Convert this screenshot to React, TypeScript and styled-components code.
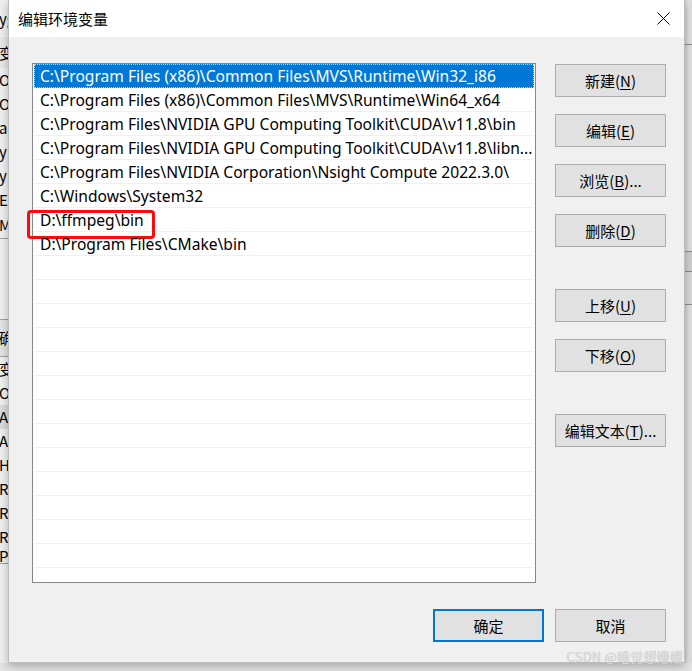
import React from "react";
import styled, { createGlobalStyle } from "styled-components";

const Global = createGlobalStyle`
  html, body { margin: 0; padding: 0; background: #f0f0f0; }
  #root { width: 692px; height: 671px; overflow: hidden; }
`;

const UI_FONT = `"Noto Sans", "Noto Sans CJK SC", sans-serif`;
const CJK_FONT = `"Noto Sans CJK SC", "Noto Sans", sans-serif`;

const Desktop = styled.div`
  position: relative;
  width: 692px;
  height: 671px;
  background: #e9e9e9;
  display: flex;
  flex-direction: column;
  overflow: hidden;
`;

const Middle = styled.div`
  display: flex;
  height: 663px;
`;

const LeftPeek = styled.div`
  width: 8px;
  flex: none;
  overflow: hidden;
  background: #f0f0f0;
  display: flex;
  flex-direction: column;
  font-family: ${CJK_FONT};
  font-size: 15px;
  color: #000;
`;

const PeekLine = styled.div<{ $h?: number; $bg?: string; $line?: boolean }>`
  height: ${(p) => p.$h ?? 24}px;
  line-height: ${(p) => p.$h ?? 24}px;
  white-space: nowrap;
  background: ${(p) => p.$bg ?? "transparent"};
  border-bottom: ${(p) => (p.$line ? "1px solid #a0a0a0" : "none")};
  margin-left: -1px;
  flex: none;
`;

const RightPeek = styled.div`
  width: 7px;
  flex: none;
  background: linear-gradient(to right, #d4d4d4, #e4e4e4 60%, #dcdcdc);
  display: flex;
  flex-direction: column;
`;

const RightBand = styled.div<{ $h: number; $bg: string; $line?: boolean }>`
  height: ${(p) => p.$h}px;
  flex: none;
  background: ${(p) => p.$bg};
  border-bottom: ${(p) => (p.$line ? "1px solid #8a8a8a" : "none")};
`;

const BottomPeek = styled.div`
  height: 8px;
  flex: none;
  background: #e4e4e4;
`;

const Dialog = styled.div`
  position: relative;
  z-index: 1;
  width: 677px;
  flex: none;
  box-sizing: border-box;
  background: #f0f0f0;
  border: 1px solid #bdbdbd;
  border-top: none;
  box-shadow: 0 3px 9px rgba(0, 0, 0, 0.28);
  display: flex;
  flex-direction: column;
`;

const TitleBar = styled.div`
  height: 37px;
  flex: none;
  background: #ffffff;
  display: flex;
  align-items: center;
  justify-content: space-between;
  padding: 0 14px 0 9px;
`;

const Title = styled.div`
  font-family: ${CJK_FONT};
  font-size: 15px;
  color: #000;
  padding-bottom: 1px;
`;

const CloseIcon = styled.svg`
  width: 13px;
  height: 13px;
  display: block;
`;

const Body = styled.div`
  flex: 1;
  display: flex;
  flex-direction: column;
  padding: 26px 18px 21px 23px;
`;

const MainRow = styled.div`
  display: flex;
  gap: 19px;
`;

const ListBox = styled.div`
  width: 504px;
  height: 520px;
  flex: none;
  box-sizing: border-box;
  border: 1px solid #828790;
  background: #ffffff;
  padding: 0 1px;
  display: flex;
  flex-direction: column;
`;

const Row = styled.div<{ $selected?: boolean }>`
  position: relative;
  height: 24px;
  flex: none;
  box-sizing: border-box;
  border-bottom: 1px solid ${(p) => (p.$selected ? "#0078d7" : "#f0f0f0")};
  background: ${(p) => (p.$selected ? "#0078d7" : "transparent")};
  color: ${(p) => (p.$selected ? "#ffffff" : "#000000")};
  outline: ${(p) => (p.$selected ? "1px dotted #f3c98c" : "none")};
  outline-offset: -1px;
  font-family: ${UI_FONT};
  font-size: 15.6px;
  line-height: 23px;
  padding: 1px 2px 0 6px;
  white-space: nowrap;
`;

const RowText = styled.div`
  overflow: hidden;
  white-space: nowrap;
`;

const Marker = styled.div`
  position: absolute;
  left: -7px;
  top: 2px;
  width: 128px;
  height: 29px;
  box-sizing: border-box;
  border: 3px solid #ff0a0a;
  border-radius: 4px;
  pointer-events: none;
`;

const SideButtons = styled.div`
  display: flex;
  flex-direction: column;
  padding-top: 1px;
`;

const Button = styled.div<{ $primary?: boolean; $gapTop?: number }>`
  width: 111px;
  height: 33px;
  box-sizing: border-box;
  background: #e1e1e1;
  border: ${(p) => (p.$primary ? "2px solid #0078d7" : "1px solid #adadad")};
  display: flex;
  align-items: center;
  justify-content: center;
  font-family: ${CJK_FONT};
  font-size: 15px;
  color: #000;
  margin-top: ${(p) => p.$gapTop ?? 0}px;
  flex: none;
  u { text-decoration-thickness: 1px; text-underline-offset: 2px; }
`;

const Footer = styled.div`
  display: flex;
  justify-content: flex-end;
  gap: 11px;
  margin-top: 26px;
`;

const Watermark = styled.div`
  position: absolute;
  right: 9px;
  bottom: 5px;
  z-index: 2;
  font-family: ${CJK_FONT};
  font-size: 13px;
  color: #dcdcdc;
  text-shadow: 0 0 1px rgba(120, 120, 120, 0.45);
  letter-spacing: 0.2px;
`;

const paths: { text: string; selected?: boolean; marked?: boolean }[] = [
  { text: "C:\\Program Files (x86)\\Common Files\\MVS\\Runtime\\Win32_i86", selected: true },
  { text: "C:\\Program Files (x86)\\Common Files\\MVS\\Runtime\\Win64_x64" },
  { text: "C:\\Program Files\\NVIDIA GPU Computing Toolkit\\CUDA\\v11.8\\bin" },
  { text: "C:\\Program Files\\NVIDIA GPU Computing Toolkit\\CUDA\\v11.8\\libn..." },
  { text: "C:\\Program Files\\NVIDIA Corporation\\Nsight Compute 2022.3.0\\" },
  { text: "C:\\Windows\\System32" },
  { text: "D:\\ffmpeg\\bin", marked: true },
  { text: "D:\\Program Files\\CMake\\bin" },
];

const rows = [...paths, ...Array.from({ length: 13 }, () => ({ text: "" }))];

const peekTop: { t: string; h?: number; bg?: string; line?: boolean }[] = [
  { t: "yg", h: 37 },
  { t: "变", h: 31, bg: "#e8e8e8" },
  { t: "Or" },
  { t: "Or" },
  { t: "a" },
  { t: "y" },
  { t: "y" },
  { t: "E" },
  { t: "M", h: 26, line: true },
  { t: "", h: 80, line: true },
  { t: "确", h: 36, bg: "#e4e4e4", line: true },
  { t: "变" },
  { t: "OS" },
  { t: "A", bg: "#dcdcdc" },
  { t: "A" },
  { t: "H" },
  { t: "R" },
  { t: "R" },
  { t: "R" },
  { t: "P", h: 14, line: true },
];

export default function App() {
  return (
    <>
      <Global />
      <Desktop>
        <Middle>
          <LeftPeek>
            {peekTop.map((p, i) => (
              <PeekLine key={i} $h={p.h} $bg={p.bg} $line={p.line}>
                {p.t}
              </PeekLine>
            ))}
          </LeftPeek>
          <Dialog>
            <TitleBar>
              <Title>编辑环境变量</Title>
              <CloseIcon viewBox="0 0 13 13">
                <path d="M0.5 0.5 L12.5 12.5 M12.5 0.5 L0.5 12.5" stroke="#000" strokeWidth="1" fill="none" />
              </CloseIcon>
            </TitleBar>
            <Body>
              <MainRow>
                <ListBox>
                  {rows.map((r, i) => (
                    <Row key={i} $selected={"selected" in r && r.selected}>
                      <RowText>{r.text}</RowText>
                      {"marked" in r && r.marked && <Marker />}
                    </Row>
                  ))}
                </ListBox>
                <SideButtons>
                  <Button>新建(<u>N</u>)</Button>
                  <Button $gapTop={17}>编辑(<u>E</u>)</Button>
                  <Button $gapTop={17}>浏览(<u>B</u>)...</Button>
                  <Button $gapTop={17}>删除(<u>D</u>)</Button>
                  <Button $gapTop={42}>上移(<u>U</u>)</Button>
                  <Button $gapTop={17}>下移(<u>O</u>)</Button>
                  <Button $gapTop={42}>编辑文本(<u>T</u>)...</Button>
                </SideButtons>
              </MainRow>
              <Footer>
                <Button $primary>确定</Button>
                <Button>取消</Button>
              </Footer>
            </Body>
          </Dialog>
          <RightPeek>
            <RightBand $h={44} $bg="transparent" $line />
            <RightBand $h={206} $bg="transparent" $line />
            <RightBand $h={19} $bg="#d0d0d0" $line />
            <RightBand $h={32} $bg="#dadada" $line />
          </RightPeek>
        </Middle>
        <BottomPeek />
        <Watermark>CSDN @睡觉想姗姗</Watermark>
      </Desktop>
    </>
  );
}
